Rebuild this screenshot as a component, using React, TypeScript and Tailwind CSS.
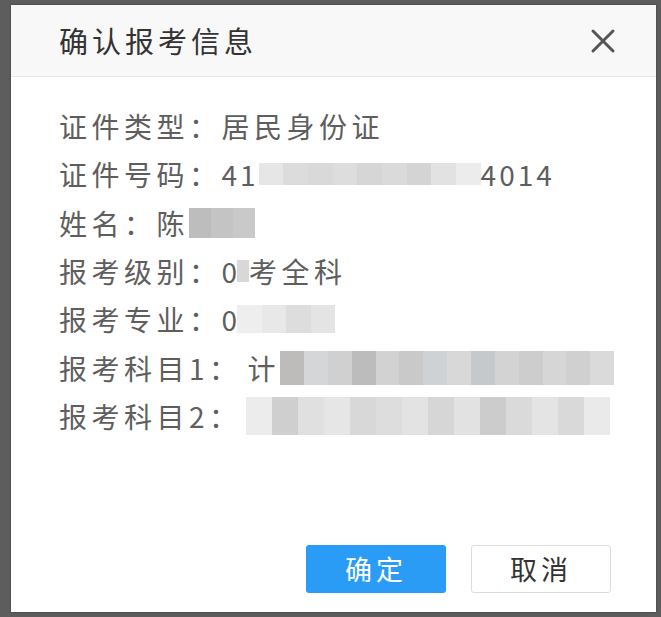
import React from "react";

const font = { fontFamily: '"Noto Sans CJK SC", "Noto Sans", sans-serif' };

function Mosaic({ cells, className }: { cells: string[]; className: string }) {
  return (
    <span className={`inline-flex self-center ${className}`}>
      {cells.map((c, i) => (
        <span key={i} className="h-full flex-1" style={{ background: c }} />
      ))}
    </span>
  );
}

function Row({ label, children }: { label: string; children?: React.ReactNode }) {
  return (
    <div className="flex h-[48.3px] items-center whitespace-nowrap">
      <span>{label}</span>
      {children}
    </div>
  );
}

export default function App() {
  return (
    <div className="h-[617px] w-[661px] overflow-hidden bg-[#5d5d5d] pl-[11px] pt-[5px]" style={font}>
      <div className="flex h-[607px] w-[645px] flex-col bg-white shadow-[0_0_2px_rgba(0,0,0,0.4)]">
        <div className="flex h-[72px] items-center justify-between border-b border-[#e6e8eb] bg-[#f8f8f8] pl-[48px] pr-[40px]">
          <span className="text-[29px] tracking-[4px] text-[#333]">确认报考信息</span>
          <svg width="26" height="26" viewBox="0 0 26 26" className="text-[#555]">
            <path d="M3 3 L23 23 M23 3 L3 23" stroke="currentColor" strokeWidth="3" strokeLinecap="round" />
          </svg>
        </div>
        <div className="flex flex-1 flex-col pl-[48px] pt-[25px] text-[28px] tracking-[4.5px] text-[#5e5e5e]">
          <Row label="证件类型：">
            <span>居民身份证</span>
          </Row>
          <Row label="证件号码：">
            <span className="tracking-[3px]">41</span>
            <Mosaic
              className="h-[22px] w-[222px]"
              cells={["#e6e6e6", "#dcdcdc", "#d9d9d9", "#dddddd", "#d6d6d6", "#dadada", "#d4d4d4", "#e2e2e2", "#ececec"]}
            />
            <span className="tracking-[3px]">4014</span>
          </Row>
          <Row label="姓名：">
            <span>陈</span>
            <Mosaic className="h-[30px] w-[66px]" cells={["#bdbdbd", "#c4c4c4", "#c9c9c9"]} />
          </Row>
          <Row label="报考级别：">
            <span className="tracking-[0px]">0</span>
            <Mosaic className="h-[22px] w-[12px]" cells={["#d8d8d8"]} />
            <span>考全科</span>
          </Row>
          <Row label="报考专业：">
            <span className="tracking-[0px]">0</span>
            <Mosaic className="h-[28px] w-[98px]" cells={["#eeeeee", "#e8e8e8", "#dddddd", "#e4e4e4"]} />
          </Row>
          <Row label="报考科目1：">
            <span className="pl-[6px]">计</span>
            <Mosaic
              className="h-[34px] w-[334px]"
              cells={["#bdbcbb", "#d4d6d8", "#d0d0d0", "#bcbcbc", "#d2d2d2", "#c9c9c9", "#cfd2d4", "#d8d8d8", "#c6c9cb", "#d3d3d3", "#cdcdcd", "#d6d6d6", "#d0d0d0", "#dadada"]}
            />
          </Row>
          <Row label="报考科目2：">
            <Mosaic
              className="ml-[4px] h-[38px] w-[364px]"
              cells={["#ececec", "#cfcfcf", "#e0e0e0", "#e6e6e6", "#d8d8d8", "#dddddd", "#e3e3e3", "#d6d6d6", "#e2e2e2", "#cccccc", "#dadada", "#e4e4e4", "#d9d9d9", "#eaeaea"]}
            />
          </Row>
          <div className="mt-auto flex justify-end gap-[25px] pb-[19px] pr-[45px]">
            <button className="flex h-[48px] w-[140px] items-center justify-center rounded-[3px] bg-[#2b9cf6] text-[27px] tracking-[4px] text-white">
              确定
            </button>
            <button className="flex h-[48px] w-[140px] items-center justify-center rounded-[3px] border border-[#dcdcdc] bg-white text-[27px] tracking-[4px] text-[#333]">
              取消
            </button>
          </div>
        </div>
      </div>
    </div>
  );
}
